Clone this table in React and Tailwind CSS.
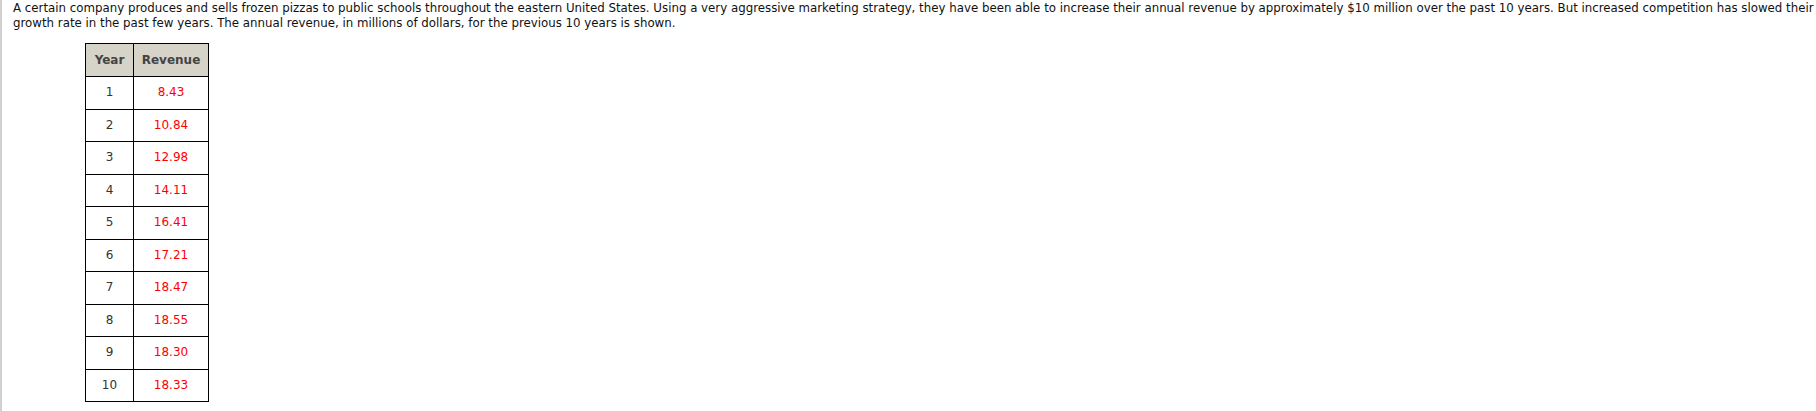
import React from 'react';

const rows = [
  [1, '8.43'],
  [2, '10.84'],
  [3, '12.98'],
  [4, '14.11'],
  [5, '16.41'],
  [6, '17.21'],
  [7, '18.47'],
  [8, '18.55'],
  [9, '18.30'],
  [10, '18.33'],
];

const RevenueTable = () => (
  <table className="ml-[72px] mt-[12px] border-collapse border border-black text-center text-[12px]">
    <thead>
      <tr className="h-[33px] bg-[#d6d3c9] text-[#444]">
        <th className="w-[48px] border border-black font-bold">Year</th>
        <th className="w-[75px] border border-black font-bold">Revenue</th>
      </tr>
    </thead>
    <tbody>
      {rows.map(([year, rev]) => (
        <tr key={year} className="h-[32.5px]">
          <td className="border border-black text-[#333]">{year}</td>
          <td className="border border-black text-[#ff0000]">{rev}</td>
        </tr>
      ))}
    </tbody>
  </table>
);

export default function App() {
  return (
    <div className="h-[411px] w-[1816px] border-l-2 border-[#d0d0d0] bg-white pl-[11px] pt-[1px] text-[11.8px] leading-[15px] text-[#111]" style={{ fontFamily: '"DejaVu Sans", Verdana, sans-serif' }}>
      <p className="whitespace-nowrap">
        A certain company produces and sells frozen pizzas to public schools throughout the eastern United States. Using a very aggressive marketing strategy, they have been able to increase their annual revenue by approximately $10 million over the past 10 years. But increased competition has slowed their
        <br />
        growth rate in the past few years. The annual revenue, in millions of dollars, for the previous 10 years is shown.
      </p>
      <RevenueTable />
    </div>
  );
}
